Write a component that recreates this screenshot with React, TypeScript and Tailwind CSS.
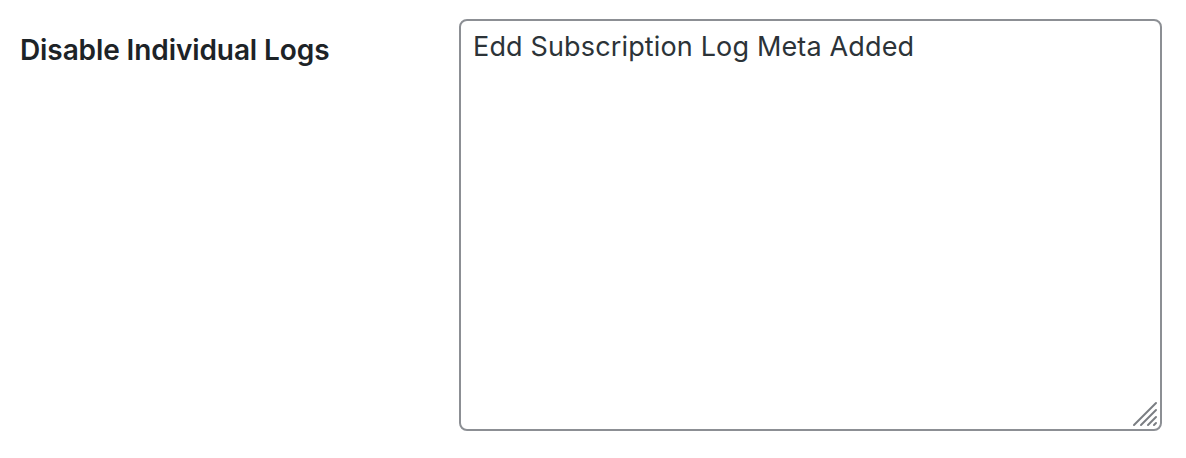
import React from "react";

export default function App() {
  return (
    <div className="w-[1186px] h-[458px] bg-white flex" style={{ fontFamily: 'Inter, "Noto Sans", sans-serif' }}>
      <div className="w-[439px] pl-[20px] pt-[32px] text-[28px] leading-[36px] font-semibold text-[#1d2327] tracking-[-0.1px]">
        Disable Individual Logs
      </div>
      <div className="pt-[19px] pl-[20px]">
        <div className="relative w-[703px] h-[412px]">
          <textarea
            className="w-full h-full resize-none border-2 border-[#8c8f94] rounded-[8px] pl-[12px] pr-[12px] pt-[6px] pb-[4px] text-[27px] leading-[40px] tracking-[0.15px] text-[#2c3338] bg-white outline-none"
            style={{ fontFamily: 'Inter, "Noto Sans", sans-serif' }}
            defaultValue="Edd Subscription Log Meta Added"
          />
          <svg className="absolute right-[4px] bottom-[4px] pointer-events-none" width="26" height="26" viewBox="0 0 26 26">
            <g stroke="#7a7d82" strokeWidth="2" strokeLinecap="round">
              <line x1="2" y1="24" x2="24" y2="2" />
              <line x1="9" y1="24" x2="24" y2="9" />
              <line x1="16" y1="24" x2="24" y2="16" />
              <line x1="22" y1="24" x2="24" y2="22" />
            </g>
          </svg>
        </div>
      </div>
    </div>
  );
}
